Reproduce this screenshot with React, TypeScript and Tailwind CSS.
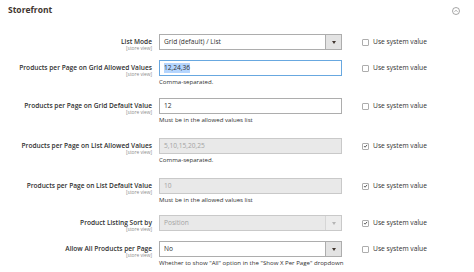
import React from "react";

type RowProps = {
  label: string;
  value: string;
  kind: "input" | "select";
  disabled?: boolean;
  focused?: boolean;
  note?: string;
  checked: boolean;
  rowClass: string;
};

function Check({ checked }: { checked: boolean }) {
  return (
    <div className="w-[7px] h-[7px] border border-[#adadad] rounded-[1px] bg-white flex items-center justify-center">
      {checked && (
        <svg width="6" height="6" viewBox="0 0 10 10">
          <path d="M2 5.2 L4.2 7.4 L8.2 2.8" fill="none" stroke="#303030" strokeWidth="1.6" />
        </svg>
      )}
    </div>
  );
}

function Row({ label, value, kind, disabled, focused, note, checked, rowClass }: RowProps) {
  const boxBorder = focused ? "border-[#68a8e0]" : disabled ? "border-[#c9c9c9]" : "border-[#adadad]";
  const boxBg = disabled ? "bg-[#e9e9e9]" : "bg-white";
  const textColor = disabled ? "text-[#a3a3a3]" : "text-[#303030]";
  return (
    <div className={`flex items-start ${rowClass}`}>
      <div className="w-[152px] flex flex-col items-end pt-[3px]">
        <div className="text-[6.6px] leading-[9px] font-semibold text-[#303030] whitespace-nowrap">{label}</div>
        <div className="text-[4.8px] leading-[5px] text-[#8a8a8a] whitespace-nowrap">[store view]</div>
      </div>
      <div className="ml-[7px] w-[183px] flex flex-col">
        <div className={`h-[16px] border ${boxBorder} ${boxBg} flex items-stretch`}>
          <div className={`flex-1 flex items-center pl-[4px] text-[6.6px] ${textColor}`}>
            {focused ? <span className="bg-[#b4d5fe]">{value}</span> : value}
          </div>
          {kind === "select" && (
            <div className={`w-[16px] border-l ${disabled ? "border-[#d6d6d6] bg-[#ececec]" : "border-[#adadad] bg-[#e3e3e3]"} flex items-center justify-center`}>
              <svg width="4" height="3" viewBox="0 0 4 3">
                <path d="M0 0 L4 0 L2 3 Z" fill={disabled ? "#b5b5b5" : "#41362f"} />
              </svg>
            </div>
          )}
        </div>
        {note && (
          <div className="mt-[2px] text-[6.1px] leading-[8px] text-[#303030] whitespace-nowrap">{note}</div>
        )}
      </div>
      <div className="ml-[20px] h-[16px] flex items-center gap-[4px]">
        <Check checked={checked} />
        <span className="text-[6.7px] text-[#303030] whitespace-nowrap">Use system value</span>
      </div>
    </div>
  );
}

export default function App() {
  return (
    <div className="w-[474px] h-[272px] bg-white overflow-hidden font-['Open_Sans',sans-serif]">
      <div className="flex items-center justify-between h-[21px] pl-[8px] pr-[14px]">
        <div className="text-[8.5px] font-bold text-[#41362f]">Storefront</div>
        <svg width="8" height="8" viewBox="0 0 16 16">
          <circle cx="8" cy="8" r="7" fill="none" stroke="#6b6b6b" strokeWidth="1.2" />
          <path d="M5 9.5 L8 6.5 L11 9.5" fill="none" stroke="#6b6b6b" strokeWidth="1.2" />
        </svg>
      </div>
      <div className="flex flex-col pt-[13px]">
        <Row rowClass="h-[26px]" label="List Mode" value="Grid (default) / List" kind="select" checked={false} />
        <Row rowClass="h-[38px]" label="Products per Page on Grid Allowed Values" value="12,24,36" kind="input" focused note="Comma-separated." checked={false} />
        <Row rowClass="h-[40px]" label="Products per Page on Grid Default Value" value="12" kind="input" note="Must be in the allowed values list" checked={false} />
        <Row rowClass="h-[40px]" label="Products per Page on List Allowed Values" value="5,10,15,20,25" kind="input" disabled note="Comma-separated." checked />
        <Row rowClass="h-[37px]" label="Products per Page on List Default Value" value="10" kind="input" disabled note="Must be in the allowed values list" checked />
        <Row rowClass="h-[26px]" label="Product Listing Sort by" value="Position" kind="select" disabled checked />
        <Row rowClass="h-[30px]" label="Allow All Products per Page" value="No" kind="select" note={'Whether to show "All" option in the "Show X Per Page" dropdown'} checked={false} />
      </div>
    </div>
  );
}
